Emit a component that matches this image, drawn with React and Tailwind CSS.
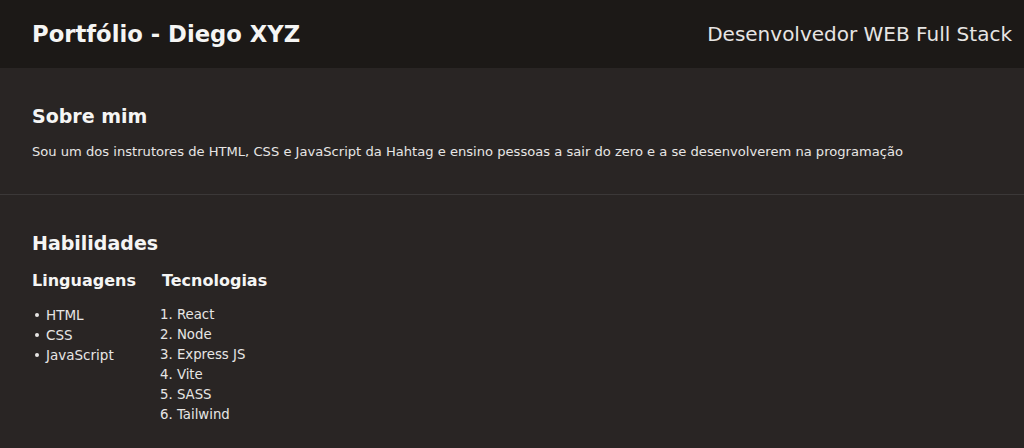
import React from 'react';

const linguagens = ['HTML', 'CSS', 'JavaScript'];
const tecnologias = ['React', 'Node', 'Express JS', 'Vite', 'SASS', 'Tailwind'];

export default function App() {
  return (
    <div className="min-h-[448px] bg-[#292524] text-[#f5f5f4] font-['DejaVu_Sans',sans-serif]">
      <header className="h-[68px] bg-[#1c1917] flex items-center justify-between pl-8 pr-3">
        <h1 className="text-[22.7px] font-bold">Portfólio - Diego XYZ</h1>
        <span className="text-[20px] text-[#e7e5e4]">Desenvolvedor WEB Full Stack</span>
      </header>

      <section className="px-8 pt-[34px] pb-[32px] border-b border-[#3b3838]">
        <h2 className="text-[19px] font-bold leading-7">Sobre mim</h2>
        <p className="mt-[12px] text-[13.1px] leading-5 text-[#e7e5e4]">
          Sou um dos instrutores de HTML, CSS e JavaScript da Hahtag e ensino pessoas a sair do zero e a se desenvolverem na programação
        </p>
      </section>

      <section className="px-8 pt-[34px] pb-6">
        <h2 className="text-[19px] font-bold leading-7">Habilidades</h2>
        <div className="mt-[12px] flex gap-[26px]">
          <div>
            <h3 className="text-[16px] font-bold leading-6">Linguagens</h3>
            <ul className="mt-[12px] pl-[3px] text-[13.5px] leading-5 text-[#e7e5e4]">
              {linguagens.map((item) => (
                <li key={item} className="flex items-center">
                  <span className="w-[4px] h-[4px] rounded-full bg-[#e7e5e4] mr-[7px]" />
                  {item}
                </li>
              ))}
            </ul>
          </div>
          <div className="-ml-[2px]">
            <h3 className="text-[16px] font-bold leading-6 ml-[2px]">Tecnologias</h3>
            <ol className="mt-[12px] text-[13.3px] leading-5 text-[#e7e5e4]">
              {tecnologias.map((item, i) => (
                <li key={item}>{i + 1}. {item}</li>
              ))}
            </ol>
          </div>
        </div>
      </section>
    </div>
  );
}
